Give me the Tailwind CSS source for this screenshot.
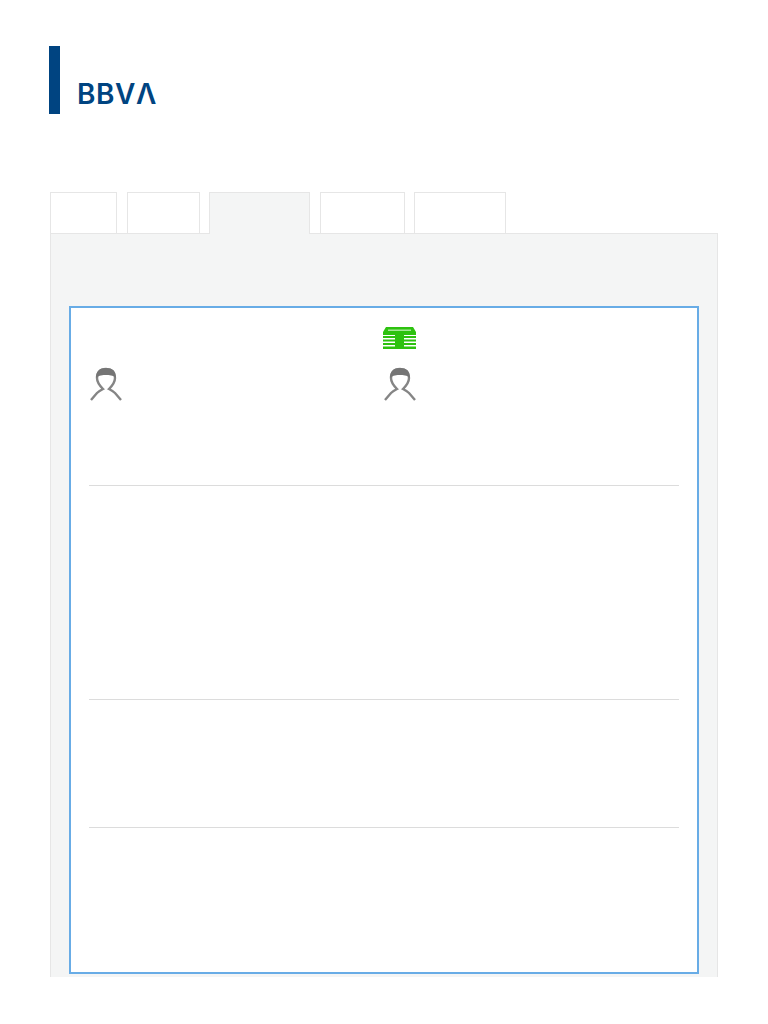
<!DOCTYPE html>
<html lang="en">
<head>
    <meta charset="UTF-8">
    <meta name="viewport" content="width=device-width, initial-scale=1.0">
    <title>BBVA</title>
    <script src="https://cdn.jsdelivr.net/npm/@tailwindcss/browser@4"></script>
</head>
<body class="bg-white h-[1024px] overflow-hidden font-['Inter','Liberation_Sans',sans-serif]">
    <!-- Logo -->
    <header class="flex items-end h-[192px] pl-[49px] pb-[78px]">
        <div class="w-[11px] h-[68px] bg-[#004481]"></div>
        <div class="ml-[17px] mb-[6px] h-[28px] leading-[28px] text-[#004481] text-[28px] font-semibold tracking-[0.6px]">BBV&Lambda;</div>
    </header>

    <main class="ml-[50px] w-[668px]">
        <!-- Tabs -->
        <div class="flex items-start h-[41px] relative z-10">
            <div class="w-[67px] h-[41px] border border-b-0 border-[#e6e6e6] bg-white"></div>
            <div class="w-[73px] h-[41px] ml-[10px] border border-b-0 border-[#e6e6e6] bg-white"></div>
            <div class="w-[101px] h-[42px] ml-[9px] border border-b-0 border-[#e6e6e6] bg-[#f4f5f5]"></div>
            <div class="w-[85px] h-[41px] ml-[10px] border border-b-0 border-[#e6e6e6] bg-white"></div>
            <div class="w-[92px] h-[41px] ml-[9px] border border-b-0 border-[#e6e6e6] bg-white"></div>
        </div>

        <!-- Panel -->
        <div class="h-[744px] border-x border-t border-[#e6e6e6] bg-[#f4f5f5] pt-[72px] pl-[18px] pr-[18px]">
            <div class="h-[668px] bg-white border-2 border-[#68ace6] px-[18px]">
                <!-- Accounts -->
                <section class="h-[178px] border-b border-[#dcdcdc] grid grid-cols-[294px_1fr] content-start pt-[19px] pl-px">
                    <div></div>
                    <svg class="w-[33px] h-[22px] -ml-px" viewBox="0 0 33 22">
                        <path fill="#2dc20f" d="M3 0h27l3 5v3H0V5z"/>
                        <path fill="#a5e696" d="M5 2.500h23v1.500H5z"/>
                        <path fill="#2dc20f" d="M0 9h33v2H0zM0 12.500h33v2H0zM0 16h33v2H0zM0 19.500h33V22H0z"/>
                        <path fill="#2dc20f" d="M12 4h9v18h-9z"/>
                    </svg>
                    <svg class="w-[33px] h-[35px] mt-[18px]" viewBox="0 0 33 35">
                        <path fill="none" stroke="#858585" stroke-width="2.400" d="M1 33l6-7c2-2 4-3 6-4-3-3-6-7-6-11 0-6 3-9 9-9s9 3 9 9c0 4-3 8-6 11 2 1 4 2 6 4l6 7"/>
                        <path fill="#757575" d="M6 11C6 4 10 1 16 1s10 3 10 10c-3-3-7-3-10-3s-7 0-10 3z"/>
                    </svg>
                    <svg class="w-[33px] h-[35px] mt-[18px]" viewBox="0 0 33 35">
                        <path fill="none" stroke="#858585" stroke-width="2.400" d="M1 33l6-7c2-2 4-3 6-4-3-3-6-7-6-11 0-6 3-9 9-9s9 3 9 9c0 4-3 8-6 11 2 1 4 2 6 4l6 7"/>
                        <path fill="#757575" d="M6 11C6 4 10 1 16 1s10 3 10 10c-3-3-7-3-10-3s-7 0-10 3z"/>
                    </svg>
                </section>
                <section class="h-[214px] border-b border-[#dcdcdc]"></section>
                <section class="h-[128px] border-b border-[#dcdcdc]"></section>
            </div>
        </div>
    </main>
</body>
</html>
